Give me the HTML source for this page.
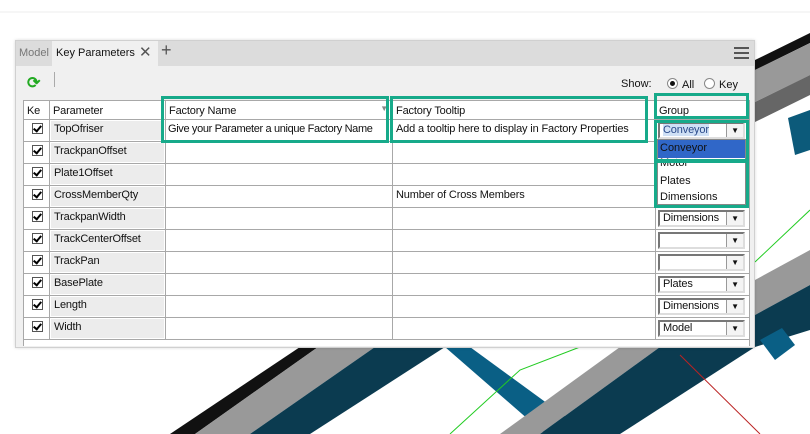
<!DOCTYPE html>
<html><head><meta charset="utf-8"><style>
*{margin:0;padding:0;box-sizing:border-box}
body{width:810px;height:434px;background:#fff;position:relative;overflow:hidden;font-family:"Liberation Sans",sans-serif;font-size:11px;color:#111}
.abs{position:absolute}
#panel{left:15px;top:40px;width:740px;height:308px;background:#f0f0f0;border:1px solid #d0d0d0;box-shadow:0 0 3px rgba(0,0,0,.15)}
table{position:absolute;left:7px;top:59px;border-collapse:collapse;background:#fff;table-layout:fixed}
td{border:1px solid #a8a8a8;height:22px;padding:0 3px;vertical-align:top;padding-top:3px;white-space:nowrap;overflow:hidden;letter-spacing:-0.15px}
tr.h td{height:19px;padding-top:4px}
td.p{background:#fff;padding:1px}
td.p div{background:#ececec;height:19px;padding:2px 3px}
.cb{display:inline-block;width:11px;height:11px;border:1px solid #555;background:#fff;margin-left:7px;position:relative}
.cb:after{content:"";position:absolute;left:2px;top:0px;width:3px;height:6px;border:solid #000;border-width:0 2px 2px 0;transform:rotate(40deg)}
.dd{position:absolute;left:2px;top:2px;width:87px;height:17px;border:2px solid #777;border-right-color:#ddd;border-bottom-color:#ddd;background:#fff;padding:0 3px;font-size:11px;line-height:13px}
.dd:after{content:"▼";position:absolute;right:0;top:0;width:16px;height:13px;background:#f4f4f4;border-left:1px solid #999;font-size:8px;text-align:center;line-height:14px}
td.g{position:relative;padding:0}
.gb{position:absolute;border:3px solid #17aa8a}
</style></head><body>
<svg class="abs" style="left:0;top:0" width="810" height="434">
<line x1="0" y1="12" x2="810" y2="12" stroke="#eee"/>
<polygon points="755,60 810,33 810,43 755,70" fill="#111"/>
<polygon points="755,70 810,43 810,75 755,102" fill="#999"/>
<polygon points="755,102 810,75 810,95 755,122" fill="#666"/>
<polygon points="788,118 810,110 810,150 795,155" fill="#0c5a7a"/>
<polygon points="755,280 810,250 810,285 755,315" fill="#999"/>
<polygon points="755,315 810,285 810,330 755,347" fill="#0b3b50"/>
<polyline points="755,262 810,210" stroke="#2c2" fill="none"/>
<polygon points="760,340 782,328 795,345 775,360" fill="#0a5f85"/>
<polygon points="170,434 300,347 318,347 195,434" fill="#111"/>
<polygon points="195,434 318,347 375,347 250,434" fill="#999"/>
<polygon points="250,434 375,347 445,347 310,434" fill="#0b3b50"/>
<polygon points="445,347 470,347 570,420 545,434" fill="#0a5f85"/>
<polygon points="500,434 620,347 660,347 540,434" fill="#999"/>
<polygon points="540,434 660,347 755,347 620,434" fill="#0b3b50"/>
<polyline points="450,434 520,370 580,347" stroke="#2c2" fill="none"/>
<polyline points="680,355 760,434" stroke="#b22" fill="none"/>
</svg>
<div id="panel" class="abs">
 <div class="abs" style="left:0;top:0;width:738px;height:25px;background:#dcdcdc"></div>
 <div class="abs" style="left:3px;top:6px;color:#777;font-size:11px">Model</div>
 <div class="abs" style="left:36px;top:0;width:106px;height:25px;background:#f0f0f0"></div>
 <div class="abs" style="left:40px;top:6px;font-size:11px">Key Parameters</div>
 <div class="abs" style="left:123px;top:2px;font-size:15px;color:#555">✕</div>
 <div class="abs" style="left:145px;top:-1px;font-size:18px;color:#555">+</div>
 <div class="abs" style="left:718px;top:6px;width:15px;height:2px;background:#555;box-shadow:0 5px 0 #555,0 10px 0 #555"></div>
 <div class="abs" style="left:11px;top:32px;font-size:16px;color:#2a2;font-weight:bold">⟳</div>
 <div class="abs" style="left:38px;top:31px;width:1px;height:15px;background:#aaa"></div>
 <div class="abs" style="left:605px;top:37px">Show:</div>
 <div class="abs" style="left:651px;top:37px;width:11px;height:11px;border:1px solid #888;border-radius:50%;background:#fff"><div style="width:5px;height:5px;background:#111;border-radius:50%;margin:2px"></div></div>
 <div class="abs" style="left:666px;top:38px">All</div>
 <div class="abs" style="left:688px;top:37px;width:11px;height:11px;border:1px solid #888;border-radius:50%;background:#fff"></div>
 <div class="abs" style="left:703px;top:38px">Key</div>
 <table>
 <colgroup><col style="width:26px"><col style="width:116px"><col style="width:227px"><col style="width:263px"><col style="width:94px"></colgroup>
 <tr class="h"><td>Ke</td><td>Parameter</td><td style="position:relative">Factory Name<span style="position:absolute;right:4px;top:3px;color:#888;font-size:8px">▼</span></td><td>Factory Tooltip</td><td>Group</td></tr>
 <tr><td><span class="cb" style="margin-left:5px"></span></td><td class="p"><div>TopOfriser</div></td><td style="letter-spacing:-0.35px;padding-left:2px">Give your Parameter a unique Factory Name</td><td>Add a tooltip here to display in Factory Properties</td><td class="g"><div class="dd"><span style="background:#cfe0f5;color:#2a4a8a">Conveyor</span></div></td></tr>
 <tr><td><span class="cb" style="margin-left:5px"></span></td><td class="p"><div>TrackpanOffset</div></td><td></td><td></td><td class="g"></td></tr>
 <tr><td><span class="cb" style="margin-left:5px"></span></td><td class="p"><div>Plate1Offset</div></td><td></td><td></td><td class="g"></td></tr>
 <tr><td><span class="cb" style="margin-left:5px"></span></td><td class="p"><div>CrossMemberQty</div></td><td></td><td>Number of Cross Members</td><td class="g"></td></tr>
 <tr><td><span class="cb" style="margin-left:5px"></span></td><td class="p"><div>TrackpanWidth</div></td><td></td><td></td><td class="g"><div class="dd">Dimensions</div></td></tr>
 <tr><td><span class="cb" style="margin-left:5px"></span></td><td class="p"><div>TrackCenterOffset</div></td><td></td><td></td><td class="g"><div class="dd"></div></td></tr>
 <tr><td><span class="cb" style="margin-left:5px"></span></td><td class="p"><div>TrackPan</div></td><td></td><td></td><td class="g"><div class="dd"></div></td></tr>
 <tr><td><span class="cb" style="margin-left:5px"></span></td><td class="p"><div>BasePlate</div></td><td></td><td></td><td class="g"><div class="dd">Plates</div></td></tr>
 <tr><td><span class="cb" style="margin-left:5px"></span></td><td class="p"><div>Length</div></td><td></td><td></td><td class="g"><div class="dd">Dimensions</div></td></tr>
 <tr><td><span class="cb" style="margin-left:5px"></span></td><td class="p"><div>Width</div></td><td></td><td></td><td class="g"><div class="dd">Model</div></td></tr>
 <tr><td colspan="5" style="height:6px;padding:0;border-bottom:none"></td></tr>
 </table>
</div>
<div class="abs" style="left:657px;top:139px;width:89px;height:66px;background:#fff;border:1px solid #888;font-size:11px">
 <div style="background:#3067c8;color:#111;height:18px;padding:2px 2px">Conveyor</div>
 <div style="height:16px;padding:0 2px;line-height:8px;overflow:hidden;padding-top:1px">Motor</div>
 <div style="height:17px;padding:1px 2px">Plates</div>
 <div style="padding:0 2px">Dimensions</div>
</div>
<div class="gb" style="left:161px;top:96px;width:228px;height:47px"></div>
<div class="gb" style="left:390px;top:96px;width:258px;height:47px"></div>
<div class="gb" style="left:654px;top:93px;width:95px;height:26px"></div>
<div class="gb" style="left:654px;top:120px;width:95px;height:42px"></div>
<div class="gb" style="left:654px;top:160px;width:95px;height:48px"></div>
</body></html>
